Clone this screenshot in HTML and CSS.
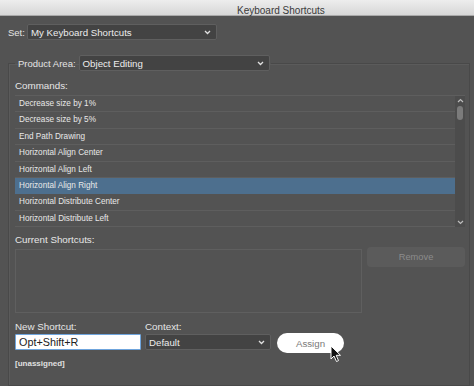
FILE: index.html
```html
<!DOCTYPE html>
<html lang="en">
<head>
  <meta charset="UTF-8" />
  <title>Keyboard Shortcuts</title>
  <link rel="stylesheet" href="styles.css">
</head>
<body>
  <div class="titlebar">
    <span class="title">Keyboard Shortcuts</span>
  </div>

  <div class="dialog">
    <div class="set-row">
      <span class="set-label">Set:</span>
      <div class="select set-select">
        <span>My Keyboard Shortcuts</span>
        <svg class="chev" width="7" height="5" viewBox="0 0 7 5"><path d="M1 1 L3.5 3.5 L6 1" fill="none" stroke="#e0e0e0" stroke-width="1.3"/></svg>
      </div>
    </div>

    <fieldset class="area">
      <legend>
        <span class="area-label">Product Area:</span>
        <div class="select area-select">
          <span>Object Editing</span>
          <svg class="chev" width="7" height="5" viewBox="0 0 7 5"><path d="M1 1 L3.5 3.5 L6 1" fill="none" stroke="#e0e0e0" stroke-width="1.3"/></svg>
        </div>
      </legend>

      <div class="label commands-label">Commands:</div>
      <div class="list">
        <div class="rows">
          <div class="row">Decrease size by 1%</div>
          <div class="row">Decrease size by 5%</div>
          <div class="row">End Path Drawing</div>
          <div class="row">Horizontal Align Center</div>
          <div class="row">Horizontal Align Left</div>
          <div class="row selected">Horizontal Align Right</div>
          <div class="row">Horizontal Distribute Center</div>
          <div class="row">Horizontal Distribute Left</div>
        </div>
        <div class="scrollbar">
          <svg width="7" height="5" viewBox="0 0 7 5"><path d="M1 4 L3.5 1.5 L6 4" fill="none" stroke="#bdbdbd" stroke-width="1.2"/></svg>
          <div class="thumb"></div>
          <div class="track-fill"></div>
          <svg width="7" height="5" viewBox="0 0 7 5"><path d="M1 1 L3.5 3.5 L6 1" fill="none" stroke="#bdbdbd" stroke-width="1.2"/></svg>
        </div>
      </div>

      <div class="label current-label">Current Shortcuts:</div>
      <div class="current-row">
        <div class="current-box"></div>
        <button class="remove-btn">Remove</button>
      </div>

      <div class="new-row">
        <div class="field">
          <div class="label">New Shortcut:</div>
          <div class="shortcut-input">Opt+Shift+R</div>
        </div>
        <div class="field">
          <div class="label">Context:</div>
          <div class="select context-select">
            <span>Default</span>
            <svg class="chev" width="7" height="5" viewBox="0 0 7 5"><path d="M1 1 L3.5 3.5 L6 1" fill="none" stroke="#e0e0e0" stroke-width="1.3"/></svg>
          </div>
        </div>
        <div class="assign-wrap">
          <button class="assign-btn">Assign</button>
          <svg class="cursor" width="12" height="18" viewBox="0 0 12 18">
            <path d="M1 1 L1 14 L4 11 L6.5 16.5 L8.5 15.6 L6.2 10.3 L10.5 10.3 Z" fill="#111" stroke="#fff" stroke-width="1"/>
          </svg>
        </div>
      </div>

      <div class="unassigned">[unassigned]</div>
    </fieldset>
  </div>
</body>
</html>
```

FILE: styles.css
```css
body {
  margin: 0;
  width: 474px;
  height: 386px;
  overflow: hidden;
  background-color: #535353;
  font-family: "Liberation Sans", Arial, sans-serif;
  color: #e4e4e4;
}
.titlebar {
  height: 16px;
  background: linear-gradient(#ededed, #d7d7d7);
  border-bottom: 1px solid #a9a9a9;
  box-sizing: border-box;
  padding-left: 237px;
}
.title {
  font-size: 10px;
  line-height: 15px;
  color: #3a3a3a;
}
.dialog {
  padding: 8px 4px 0 8px;
}
.set-row {
  display: flex;
  align-items: center;
  height: 16px;
}
.set-label {
  font-size: 9.5px;
  width: 19px;
}
.select {
  display: flex;
  align-items: center;
  justify-content: space-between;
  box-sizing: border-box;
  height: 16px;
  background-color: #434343;
  border: 1px solid #5f5f5f;
  border-radius: 2px;
  padding: 0 5px 0 3px;
  font-size: 9.7px;
  color: #ececec;
}
.set-select {
  width: 190px;
}
.area {
  margin: 15px 0 0 0;
  padding: 0 4px 16px 6px;
  width: 462px;
  box-sizing: border-box;
  border: 1px solid #494949;
  box-shadow: inset 1px 1px 0 #5b5b5b;
}
.area legend {
  display: flex;
  align-items: center;
  padding: 0 1px 0 3px;
  height: 16px;
}
.area-label {
  font-size: 9.5px;
  margin-right: 3px;
}
.area-select {
  width: 191px;
}
.label {
  font-size: 9.8px;
  line-height: 12px;
  height: 12px;
  color: #e6e6e6;
}
.commands-label {
  margin-top: 9px;
  margin-bottom: 3px;
}
.list {
  display: flex;
  height: 132px;
  border-top: 1px solid #5e5e5e;
  box-sizing: border-box;
}
.rows {
  flex: 1;
}
.row {
  height: 16.4px;
  box-sizing: border-box;
  border-bottom: 1px solid #5e5e5e;
  padding-left: 4px;
  font-size: 8.2px;
  line-height: 15.4px;
  color: #e8e8e8;
}
.row.selected {
  background-color: #4d6f8e;
  border-bottom-color: #4d6f8e;
}
.scrollbar {
  width: 10px;
  background-color: #4c4c4c;
  display: flex;
  flex-direction: column;
  align-items: center;
  padding: 2px 0 2px;
  box-sizing: border-box;
}
.thumb {
  width: 6px;
  height: 14px;
  margin-top: 3px;
  border-radius: 3px;
  background-color: #7b7b7b;
}
.track-fill {
  flex: 1;
}
.current-label {
  margin-top: 7px;
  margin-bottom: 3px;
}
.current-row {
  display: flex;
  align-items: flex-start;
}
.current-box {
  width: 347px;
  height: 64px;
  box-sizing: border-box;
  border: 1px solid #5f5f5f;
}
.remove-btn {
  margin: -2px 0 0 5px;
  width: 98px;
  height: 20px;
  border: none;
  border-radius: 4px;
  background-color: #5b5b5b;
  color: #8c8c8c;
  font-family: "Liberation Sans", Arial, sans-serif;
  font-size: 9.3px;
  padding: 0;
}
.new-row {
  display: flex;
  align-items: flex-end;
  margin-top: 8px;
}
.field {
  width: 126px;
  margin-right: 4px;
}
.field .label {
  margin-bottom: 1px;
}
.shortcut-input {
  height: 16px;
  box-sizing: border-box;
  background-color: #ffffff;
  border: 1px solid #6fa5dd;
  border-radius: 1px;
  padding-left: 3px;
  font-size: 10.8px;
  line-height: 14px;
  color: #222;
}
.context-select {
  width: 126px;
}
.assign-wrap {
  position: relative;
  margin-left: 2px;
  margin-bottom: -3px;
}
.assign-btn {
  width: 67px;
  height: 20px;
  border: none;
  border-radius: 10px;
  background-color: #ffffff;
  color: #7a7a7a;
  font-family: "Liberation Sans", Arial, sans-serif;
  font-size: 9.7px;
  padding: 0;
}
.cursor {
  position: absolute;
  left: 53px;
  top: 12px;
}
.unassigned {
  margin-top: 9px;
  font-size: 8px;
  font-weight: bold;
  color: #e0e0e0;
  line-height: 10px;
}
```
